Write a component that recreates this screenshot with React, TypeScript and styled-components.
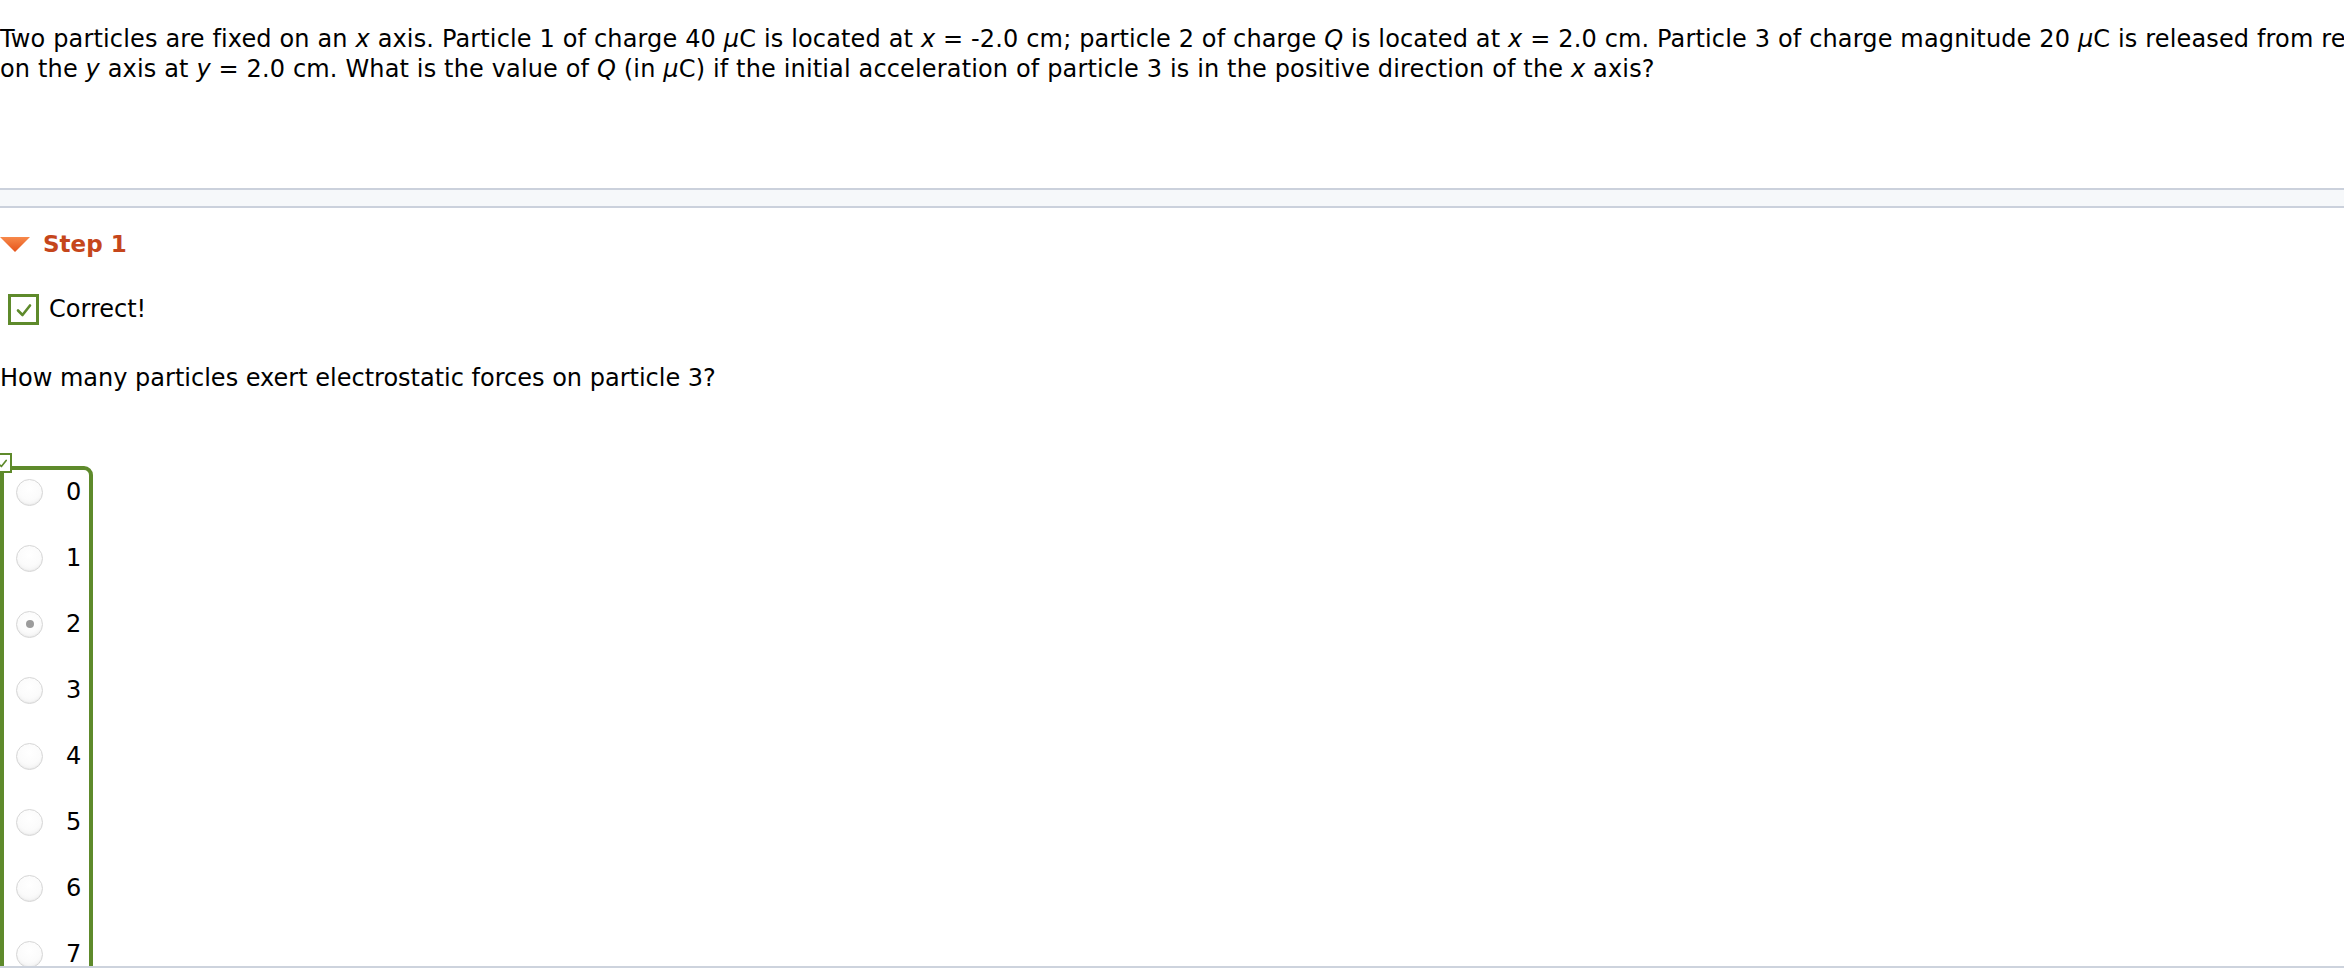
import React from "react";
import styled, { createGlobalStyle } from "styled-components";

const GlobalStyle = createGlobalStyle`
  html, body {
    margin: 0;
    padding: 0;
    background: #ffffff;
    overflow: hidden;
  }
  * { box-sizing: border-box; }
`;

const Viewport = styled.div`
  height: 968px;
  overflow: hidden;
  border-bottom: 2px solid #cdd3dd;
  background: #ffffff;
  color: #000000;
`;

const Question = styled.div`
  padding-top: 25px;
  font-family: "DejaVu Sans", Verdana, sans-serif;
  font-size: 24px;
  letter-spacing: 0.15px;
  line-height: 29.5px;
  color: #000;
`;

const QLine = styled.div`
  white-space: nowrap;
`;

const Divider = styled.div`
  margin-top: 104px;
  height: 20px;
  border-top: 2px solid #cbd1dc;
  border-bottom: 2px solid #cbd1dc;
  background: #f6f8fa;
`;

const StepHeader = styled.div`
  margin-top: 21px;
  display: flex;
  align-items: center;
  gap: 13px;
  height: 30px;
`;

const StepTitle = styled.span`
  font-family: "DejaVu Sans", Verdana, sans-serif;
  font-weight: bold;
  font-size: 23px;
  line-height: 30px;
  color: #c5461b;
`;

const Feedback = styled.div`
  margin-top: 35px;
  display: flex;
  align-items: center;
  gap: 10px;
  padding-left: 8px;
  height: 31px;
`;

const CheckBox = styled.span<{ $size: number; $border: number }>`
  display: inline-flex;
  width: ${(p) => p.$size}px;
  height: ${(p) => p.$size}px;
  border: ${(p) => p.$border}px solid #5e8a2b;
  background: #ffffff;
  flex: none;
`;

const BodyText = styled.span`
  font-family: "DejaVu Sans", Verdana, sans-serif;
  font-size: 24px;
  line-height: 31px;
  color: #000;
`;

const Prompt = styled.div`
  margin-top: 38px;
  font-family: "DejaVu Sans", Verdana, sans-serif;
  font-size: 24px;
  line-height: 30px;
  color: #000;
`;

const OptionsWrap = styled.div`
  position: relative;
  margin-top: 73px;
  width: 93px;
`;

const Badge = styled.span`
  position: absolute;
  left: -8px;
  top: -13px;
  width: 20px;
  height: 20px;
  border: 2px solid #5e8a2b;
  background: #ffffff;
  z-index: 2;
  overflow: hidden;
`;

const OptionsBox = styled.div`
  border: 4px solid #5e8a2b;
  border-radius: 0 9px 0 0;
  display: flex;
  flex-direction: column;
  gap: 22px;
  padding: 0 0 22px 12px;
`;

const OptionRow = styled.label`
  display: flex;
  align-items: center;
  gap: 23px;
  height: 44px;
`;

const Radio = styled.span<{ $checked?: boolean }>`
  width: 27px;
  height: 27px;
  border-radius: 50%;
  border: 1px solid #d6d6d6;
  background: radial-gradient(circle at 50% 35%, #ffffff 0%, #fbfbfb 55%, #ececec 100%);
  box-shadow: inset 0 -1px 1px rgba(0, 0, 0, 0.04);
  flex: none;
  display: flex;
  align-items: center;
  justify-content: center;

  &::after {
    content: "";
    display: ${(p) => (p.$checked ? "block" : "none")};
    width: 8px;
    height: 8px;
    border-radius: 50%;
    background: #9b9b9b;
  }
`;

const OptionLabel = styled.span`
  font-family: "DejaVu Sans", Verdana, sans-serif;
  font-size: 24px;
  line-height: 30px;
  color: #000;
`;

const Triangle = () => (
  <svg width="30" height="16" viewBox="0 0 30 16" style={{ display: "block", flex: "none" }}>
    <defs>
      <linearGradient id="tri" x1="0" y1="0" x2="0" y2="1">
        <stop offset="0" stopColor="#f7894a" />
        <stop offset="1" stopColor="#e5531a" />
      </linearGradient>
    </defs>
    <polygon points="0,1 30,1 15,16" fill="url(#tri)" />
  </svg>
);

const Check = ({ size }: { size: number }) => (
  <svg width={size} height={size} viewBox="0 0 25 25" style={{ display: "block" }}>
    <polyline
      points="7,13.5 11.5,18 19,8.5"
      fill="none"
      stroke="#5e8a2b"
      strokeWidth="2.6"
      strokeLinecap="round"
      strokeLinejoin="round"
    />
  </svg>
);

const options = ["0", "1", "2", "3", "4", "5", "6", "7", "8", "9", "10"];

export default function App() {
  return (
    <>
      <GlobalStyle />
      <Viewport>
        <Question>
          <QLine>
            Two particles are fixed on an <i>x</i> axis. Particle 1 of charge 40 <i>μ</i>C is located at <i>x</i> = -2.0 cm;
            particle 2 of charge <i>Q</i> is located at <i>x</i> = 2.0 cm. Particle 3 of charge magnitude 20 <i>μ</i>C is
            released from rest
          </QLine>
          <QLine>
            on the <i>y</i> axis at <i>y</i> = 2.0 cm. What is the value of <i>Q</i> (in <i>μ</i>C) if the initial
            acceleration of particle 3 is in the positive direction of the <i>x</i> axis?
          </QLine>
        </Question>
        <Divider />
        <StepHeader>
          <Triangle />
          <StepTitle>Step 1</StepTitle>
        </StepHeader>
        <Feedback>
          <CheckBox $size={31} $border={3}>
            <Check size={25} />
          </CheckBox>
          <BodyText>Correct!</BodyText>
        </Feedback>
        <Prompt>How many particles exert electrostatic forces on particle 3?</Prompt>
        <OptionsWrap>
          <Badge>
            <Check size={16} />
          </Badge>
          <OptionsBox>
            {options.map((o) => (
              <OptionRow key={o}>
                <Radio $checked={o === "2"} />
                <OptionLabel>{o}</OptionLabel>
              </OptionRow>
            ))}
          </OptionsBox>
        </OptionsWrap>
      </Viewport>
    </>
  );
}
